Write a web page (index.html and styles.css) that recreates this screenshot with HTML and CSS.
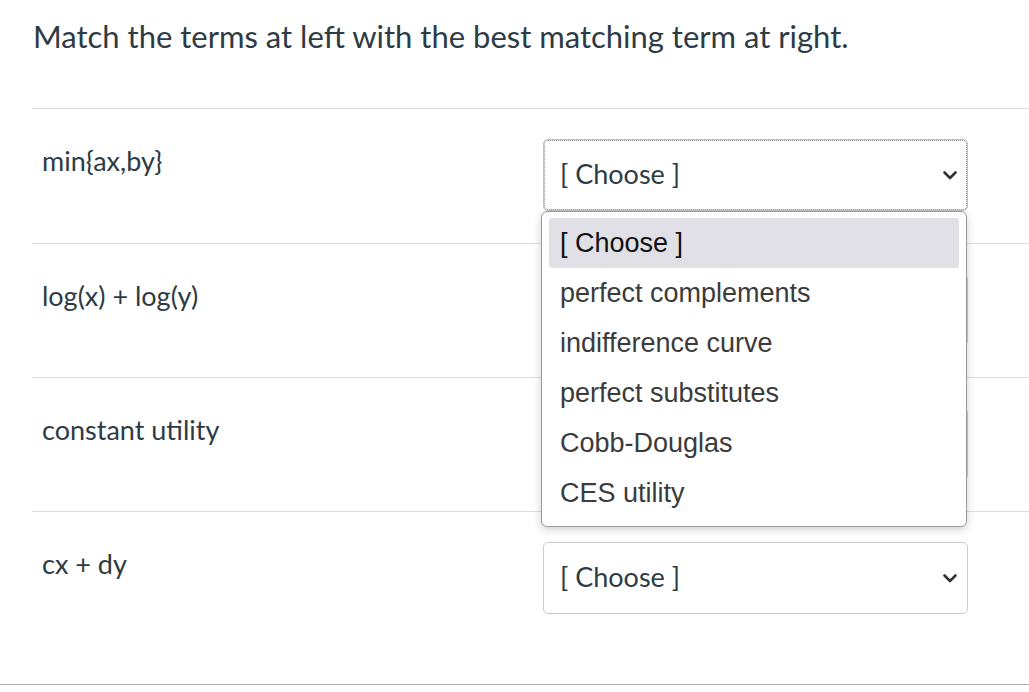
FILE: index.html
```html
<!DOCTYPE html>
<html lang="en">
<head>
<meta charset="utf-8">
<title>Matching question</title>
<link rel="stylesheet" href="styles.css">
</head>
<body>
<div class="page">
  <div class="question">
    <h1 class="prompt">Match the terms at left with the best matching term at right.</h1>
    <div class="answers">
      <div class="row row-open">
        <div class="term">min{ax,by}</div>
        <div class="choice">
          <div class="select is-focused">
            <span class="select-value">[ Choose ]</span>
            <svg class="chevron" width="16" height="11" viewBox="0 0 16 11"><path d="M2.5 2.5 L8 8 L13.5 2.5" fill="none" stroke="#333" stroke-width="2.6" stroke-linecap="round" stroke-linejoin="round"/></svg>
          </div>
          <ul class="menu">
            <li class="menu-item is-active">[ Choose ]</li>
            <li class="menu-item">perfect complements</li>
            <li class="menu-item">indifference curve</li>
            <li class="menu-item">perfect substitutes</li>
            <li class="menu-item">Cobb-Douglas</li>
            <li class="menu-item">CES utility</li>
          </ul>
        </div>
      </div>
      <div class="row">
        <div class="term">log(x) + log(y)</div>
        <div class="choice">
          <div class="select">
            <span class="select-value">[ Choose ]</span>
            <svg class="chevron" width="16" height="11" viewBox="0 0 16 11"><path d="M2.5 2.5 L8 8 L13.5 2.5" fill="none" stroke="#333" stroke-width="2.6" stroke-linecap="round" stroke-linejoin="round"/></svg>
          </div>
        </div>
      </div>
      <div class="row">
        <div class="term">constant utility</div>
        <div class="choice">
          <div class="select">
            <span class="select-value">[ Choose ]</span>
            <svg class="chevron" width="16" height="11" viewBox="0 0 16 11"><path d="M2.5 2.5 L8 8 L13.5 2.5" fill="none" stroke="#333" stroke-width="2.6" stroke-linecap="round" stroke-linejoin="round"/></svg>
          </div>
        </div>
      </div>
      <div class="row">
        <div class="term">cx + dy</div>
        <div class="choice">
          <div class="select">
            <span class="select-value">[ Choose ]</span>
            <svg class="chevron" width="16" height="11" viewBox="0 0 16 11"><path d="M2.5 2.5 L8 8 L13.5 2.5" fill="none" stroke="#333" stroke-width="2.6" stroke-linecap="round" stroke-linejoin="round"/></svg>
          </div>
        </div>
      </div>
    </div>
  </div>
  <div class="footer"></div>
</div>
</body>
</html>
```

FILE: styles.css
```css
html, body {
  margin: 0;
  padding: 0;
  background: #fff;
}

body {
  font-family: Lato, "Open Sans", sans-serif;
  color: #2d3b45;
}

.page {
  width: 1029px;
  height: 692px;
  overflow: hidden;
}

.question {
  padding-left: 32px;
}

.prompt {
  margin: 0;
  padding: 16px 0 0 1px;
  height: 108px;
  box-sizing: border-box;
  font-size: 31px;
  font-weight: 400;
  line-height: 40px;
  color: #2d3b45;
}

.answers {
  display: flex;
  flex-direction: column;
}

.row {
  display: grid;
  grid-template-columns: 511px 425px;
  height: 135px;
  box-sizing: border-box;
  border-top: 1px solid #dcdcdc;
}

.row:nth-child(2),
.row:nth-child(3) {
  height: 134px;
}

.row:last-child {
  height: 173px;
}

.row-open {
  position: relative;
  z-index: 5;
}

.term {
  padding: 36px 0 0 10px;
  font-size: 27px;
  line-height: 32px;
  color: #2d3b45;
}

.choice {
  position: relative;
  padding-top: 30px;
}

.select {
  display: flex;
  align-items: center;
  justify-content: space-between;
  height: 72px;
  box-sizing: border-box;
  border: 1px solid #c7cdd1;
  border-radius: 5px;
  padding: 0 9px 3px 16px;
  font-size: 27px;
  color: #2d3b45;
  background: #fff;
}

.select.is-focused {
  border-color: #c0c0c0;
  outline: 1px dotted #8a8a8a;
  outline-offset: -2px;
}

.chevron {
  display: block;
  margin-top: 4px;
}

.menu {
  position: absolute;
  z-index: 10;
  top: 102px;
  left: -2px;
  width: 426px;
  height: 316px;
  box-sizing: border-box;
  margin: 0;
  padding: 6px 7px;
  list-style: none;
  background: #fff;
  border: 1px solid #9a9a9a;
  border-radius: 6px;
  box-shadow: 0 3px 8px rgba(0, 0, 0, 0.18);
  font-family: "Liberation Sans", Arial, sans-serif;
  font-size: 27px;
}

.menu-item {
  height: 50px;
  line-height: 51px;
  padding-left: 11px;
  color: #3b3b3b;
  border-radius: 3px;
}

.menu-item.is-active {
  background: #e0e0e6;
  color: #111;
}

.footer {
  border-top: 1px solid #b0b0b0;
}
```
